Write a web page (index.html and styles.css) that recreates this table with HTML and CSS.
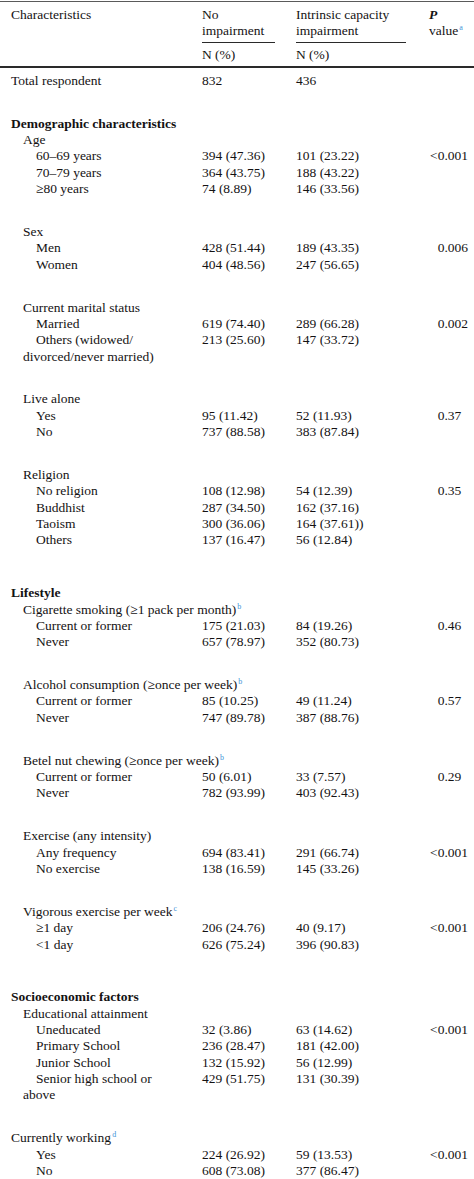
FILE: index.html
```html
<!DOCTYPE html>
<html lang="en">
<head>
<meta charset="utf-8">
<title>Characteristics table</title>
<link rel="stylesheet" href="styles.css">
</head>
<body>
<table class="tbl">
  <colgroup>
    <col class="c1">
    <col class="c2">
    <col class="c3">
    <col class="c4">
  </colgroup>
  <thead>
    <tr class="h1">
      <th class="l0" rowspan="2">Characteristics</th>
      <th><div class="hd w2">No<br>impairment</div></th>
      <th><div class="hd w3">Intrinsic capacity<br>impairment</div></th>
      <th class="ph" rowspan="2"><b><i>P</i></b><br>value<sup>a</sup></th>
    </tr>
    <tr class="h2">
      <th>N (%)</th>
      <th>N (%)</th>
    </tr>
  </thead>
  <tbody>
    <tr class="first"><td class="l0">Total respondent</td><td>832</td><td>436</td><td class="p"></td></tr>

    <tr class="gap"><td class="l0 b" colspan="4">Demographic characteristics</td></tr>
    <tr><td class="l1" colspan="4">Age</td></tr>
    <tr><td class="l2">60–69 years</td><td>394 (47.36)</td><td>101 (23.22)</td><td class="p lt">&lt;0.001</td></tr>
    <tr><td class="l2">70–79 years</td><td>364 (43.75)</td><td>188 (43.22)</td><td class="p"></td></tr>
    <tr><td class="l2">≥80 years</td><td>74 (8.89)</td><td>146 (33.56)</td><td class="p"></td></tr>

    <tr class="gap"><td class="l1" colspan="4">Sex</td></tr>
    <tr><td class="l2">Men</td><td>428 (51.44)</td><td>189 (43.35)</td><td class="p">0.006</td></tr>
    <tr><td class="l2">Women</td><td>404 (48.56)</td><td>247 (56.65)</td><td class="p"></td></tr>

    <tr class="gap"><td class="l1" colspan="4">Current marital status</td></tr>
    <tr><td class="l2">Married</td><td>619 (74.40)</td><td>289 (66.28)</td><td class="p">0.002</td></tr>
    <tr><td class="l2">Others (widowed/<br>divorced/never married)</td><td>213 (25.60)</td><td>147 (33.72)</td><td class="p"></td></tr>

    <tr class="gap"><td class="l1" colspan="4">Live alone</td></tr>
    <tr><td class="l2">Yes</td><td>95 (11.42)</td><td>52 (11.93)</td><td class="p">0.37</td></tr>
    <tr><td class="l2">No</td><td>737 (88.58)</td><td>383 (87.84)</td><td class="p"></td></tr>

    <tr class="gap"><td class="l1" colspan="4">Religion</td></tr>
    <tr><td class="l2">No religion</td><td>108 (12.98)</td><td>54 (12.39)</td><td class="p">0.35</td></tr>
    <tr><td class="l2">Buddhist</td><td>287 (34.50)</td><td>162 (37.16)</td><td class="p"></td></tr>
    <tr><td class="l2">Taoism</td><td>300 (36.06)</td><td>164 (37.61))</td><td class="p"></td></tr>
    <tr><td class="l2">Others</td><td>137 (16.47)</td><td>56 (12.84)</td><td class="p"></td></tr>

    <tr class="sec"><td class="l0 b" colspan="4">Lifestyle</td></tr>
    <tr><td class="l1" colspan="4">Cigarette smoking (≥1 pack per month)<sup>b</sup></td></tr>
    <tr><td class="l2">Current or former</td><td>175 (21.03)</td><td>84 (19.26)</td><td class="p">0.46</td></tr>
    <tr><td class="l2">Never</td><td>657 (78.97)</td><td>352 (80.73)</td><td class="p"></td></tr>

    <tr class="gap"><td class="l1" colspan="4">Alcohol consumption (≥once per week)<sup>b</sup></td></tr>
    <tr><td class="l2">Current or former</td><td>85 (10.25)</td><td>49 (11.24)</td><td class="p">0.57</td></tr>
    <tr><td class="l2">Never</td><td>747 (89.78)</td><td>387 (88.76)</td><td class="p"></td></tr>

    <tr class="gap"><td class="l1" colspan="4">Betel nut chewing (≥once per week)<sup>b</sup></td></tr>
    <tr><td class="l2">Current or former</td><td>50 (6.01)</td><td>33 (7.57)</td><td class="p">0.29</td></tr>
    <tr><td class="l2">Never</td><td>782 (93.99)</td><td>403 (92.43)</td><td class="p"></td></tr>

    <tr class="gap"><td class="l1" colspan="4">Exercise (any intensity)</td></tr>
    <tr><td class="l2">Any frequency</td><td>694 (83.41)</td><td>291 (66.74)</td><td class="p lt">&lt;0.001</td></tr>
    <tr><td class="l2">No exercise</td><td>138 (16.59)</td><td>145 (33.26)</td><td class="p"></td></tr>

    <tr class="gap"><td class="l1" colspan="4">Vigorous exercise per week<sup>c</sup></td></tr>
    <tr><td class="l2">≥1 day</td><td>206 (24.76)</td><td>40 (9.17)</td><td class="p lt">&lt;0.001</td></tr>
    <tr><td class="l2">&lt;1 day</td><td>626 (75.24)</td><td>396 (90.83)</td><td class="p"></td></tr>

    <tr class="sec"><td class="l0 b" colspan="4">Socioeconomic factors</td></tr>
    <tr><td class="l1" colspan="4">Educational attainment</td></tr>
    <tr><td class="l2">Uneducated</td><td>32 (3.86)</td><td>63 (14.62)</td><td class="p lt">&lt;0.001</td></tr>
    <tr><td class="l2">Primary School</td><td>236 (28.47)</td><td>181 (42.00)</td><td class="p"></td></tr>
    <tr><td class="l2">Junior School</td><td>132 (15.92)</td><td>56 (12.99)</td><td class="p"></td></tr>
    <tr><td class="l2">Senior high school or<br>above</td><td>429 (51.75)</td><td>131 (30.39)</td><td class="p"></td></tr>

    <tr class="gap"><td class="l0" colspan="4">Currently working<sup>d</sup></td></tr>
    <tr><td class="l2">Yes</td><td>224 (26.92)</td><td>59 (13.53)</td><td class="p lt">&lt;0.001</td></tr>
    <tr><td class="l2">No</td><td>608 (73.08)</td><td>377 (86.47)</td><td class="p"></td></tr>
  </tbody>
</table>
</body>
</html>
```

FILE: styles.css
```css
html, body {
  margin: 0;
  padding: 0;
  background: #ffffff;
}

body {
  font-family: "Liberation Serif", "Times New Roman", serif;
  font-size: 13.5px;
  color: #141213;
}

.tbl {
  width: 474px;
  margin-top: 1px;
  border-collapse: collapse;
  table-layout: fixed;
  border-top: 1.5px solid #5a5a5a;
}

.c1 { width: 202px; }
.c2 { width: 94px; }
.c3 { width: 133px; }
.c4 { width: 45px; }

th, td {
  padding: 0;
  text-align: left;
  vertical-align: top;
  font-weight: normal;
  line-height: 16.33px;
  white-space: nowrap;
}

thead {
  border-bottom: 2px solid #2a2a2a;
}

.h1 th {
  padding-top: 4.5px;
}

.hd {
  padding-bottom: 3px;
  border-bottom: 1.5px solid #2a2a2a;
}

.w2 { width: 73px; }
.w3 { width: 110px; }

.h2 th {
  padding-top: 4px;
  padding-bottom: 3px;
}

.ph {
  padding-left: 0;
}

.first td {
  padding-top: 4.3px;
}

.gap td {
  padding-top: 26.6px;
}

.sec td {
  padding-top: 36.6px;
}

.l0 { padding-left: 11px; }
.l1 { padding-left: 23px; }
.l2 { padding-left: 23px; text-indent: 13px; }

.b { font-weight: bold; }

.p { padding-left: 8.7px; }
.lt { text-indent: -7.6px; }

sup {
  font-size: 8px;
  line-height: 0;
  vertical-align: 5px;
  color: #3f95d8;
  margin-left: 1px;
}
```
